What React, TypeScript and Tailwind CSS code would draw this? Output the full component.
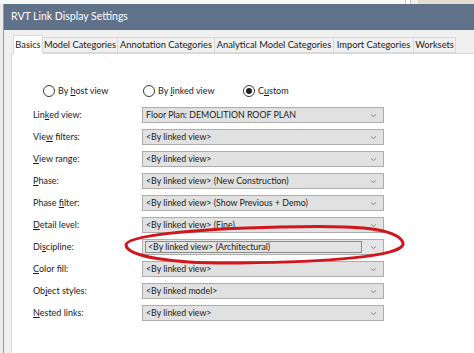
import React from "react";

const tabs = [
  { label: "Basics", w: "w-[30px]" },
  { label: "Model Categories", w: "w-[76px]" },
  { label: "Annotation Categories", w: "w-[98px]" },
  { label: "Analytical Model Categories", w: "w-[120px]" },
  { label: "Import Categories", w: "w-[81px]" },
  { label: "Worksets", w: "w-[43px]" },
];

type Row = { pre: string; key: string; post: string; value: string; focused?: boolean };

const rows: Row[] = [
  { pre: "Lin", key: "k", post: "ed view:", value: "Floor Plan: DEMOLITION ROOF PLAN" },
  { pre: "Vie", key: "w", post: " filters:", value: "<By linked view>" },
  { pre: "", key: "V", post: "iew range:", value: "<By linked view>" },
  { pre: "", key: "P", post: "hase:", value: "<By linked view> (New Construction)" },
  { pre: "Phase ", key: "f", post: "ilter:", value: "<By linked view> (Show Previous + Demo)" },
  { pre: "", key: "D", post: "etail level:", value: "<By linked view> (Fine)" },
  { pre: "Di", key: "s", post: "cipline:", value: "<By linked view> (Architectural)", focused: true },
  { pre: "", key: "C", post: "olor fill:", value: "<By linked view>" },
  { pre: "Ob", key: "j", post: "ect styles:", value: "<By linked model>" },
  { pre: "", key: "N", post: "ested links:", value: "<By linked view>" },
];

function Chevron() {
  return (
    <svg width="7" height="5" viewBox="0 0 7 5" className="shrink-0">
      <path d="M1 1.5 L3.5 3.5 L6 1.5" fill="none" stroke="#8a8a8a" strokeWidth="1" />
    </svg>
  );
}

function Radio({ checked, pre, k, post }: { checked?: boolean; pre: string; k: string; post: string }) {
  return (
    <div className="flex w-[100px] items-center gap-[3px]">
      <span className="flex h-[12px] w-[12px] items-center justify-center rounded-full border border-[#3a3a3a] bg-white">
        {checked && <span className="h-[6px] w-[6px] rounded-full bg-[#222]" />}
      </span>
      <span>
        {pre}
        <span className="underline underline-offset-1">{k}</span>
        {post}
      </span>
    </div>
  );
}

function Dropdown({ value, focused }: { value: string; focused?: boolean }) {
  if (focused) {
    return (
      <div className="flex h-[16px] w-[242px] items-center border border-[#adadad] bg-[#e5e5e5] pr-[6px] text-[8.8px]">
        <div className="ml-[2px] mr-[8px] flex h-[12px] flex-1 items-center border border-[#8a8a8a] bg-[#e3e3e3] pl-[2px]">
          <span className="leading-none">{value}</span>
        </div>
        <Chevron />
      </div>
    );
  }
  return (
    <div className="flex h-[16px] w-[242px] items-center justify-between border border-[#adadad] bg-[#e1e1e1] pl-[3px] pr-[6px] text-[8.8px]">
      <span className="leading-none">{value}</span>
      <Chevron />
    </div>
  );
}

export default function App() {
  return (
    <div className="relative h-[353px] w-[474px] overflow-hidden bg-[#f0f0f0] font-['Lato',sans-serif] text-[9px] text-[#1a1a1a]">
      {/* window behind the dialog */}
      <div className="flex h-[4px]">
        <div className="w-[405px] bg-[#f7f7f7]" />
        <div className="w-[6px] border-x border-[#c9c9c9] bg-white" />
        <div className="w-[7px] bg-[#f3f1ea]" />
        <div className="flex-1 bg-[#e5dfcf]" />
      </div>

      <div className="flex h-[349px]">
        <div className="w-[4px] border-r border-[#9a9a9a] bg-[#ececec]" />
        <div className="flex flex-1 flex-col">
          {/* title bar */}
          <div className="flex h-[26px] items-center bg-[#60728a] pl-[7px] text-[10.5px] text-white">
            RVT Link Display Settings
          </div>

          {/* tabs */}
          <div className="flex h-[23px] items-end whitespace-nowrap pl-[9px] text-[9.3px]">
            {tabs.map((t, i) =>
              i === 0 ? (
                <div
                  key={t.label}
                  className={`relative z-10 -mb-px flex h-[19px] items-center justify-center border border-b-0 border-[#d9d9d9] bg-white ${t.w}`}
                >
                  {t.label}
                </div>
              ) : (
                <div
                  key={t.label}
                  className={`-ml-px flex h-[16px] items-center justify-center border border-[#d9d9d9] bg-[#f0f0f0] ${t.w}`}
                >
                  {t.label}
                </div>
              )
            )}
          </div>

          {/* tab panel */}
          <div className="ml-[7px] flex-1 border-l border-t border-[#d9d9d9] bg-white pl-[31px] pt-[31px]">
            <div className="flex h-[12px] items-center">
              <Radio pre="By " k="h" post="ost view" />
              <Radio pre="By " k="l" post="inked view" />
              <Radio checked pre="C" k="u" post="stom" />
            </div>

            <div className="-ml-[10px] mt-[10px] flex flex-col gap-[6px]">
              {rows.map((r) => (
                <div key={r.post} className="flex h-[16px] items-center">
                  <span className="w-[109px]">
                    {r.pre}
                    <span className="underline underline-offset-1">{r.key}</span>
                    {r.post}
                  </span>
                  <Dropdown value={r.value} focused={r.focused} />
                </div>
              ))}
            </div>
          </div>
        </div>
      </div>

      {/* hand-drawn red ellipse over Discipline */}
      <svg className="pointer-events-none absolute left-0 top-0" width="474" height="353" viewBox="0 0 474 353">
        <path
          d="M126,245 C125,236 190,229 280,227 C350,225 398,227 403,243 C406,257 320,262 240,263 C170,264 127,256 126,245 Z"
          fill="none"
          stroke="#d0161c"
          strokeWidth="3"
          strokeLinecap="round"
        />
      </svg>
    </div>
  );
}
